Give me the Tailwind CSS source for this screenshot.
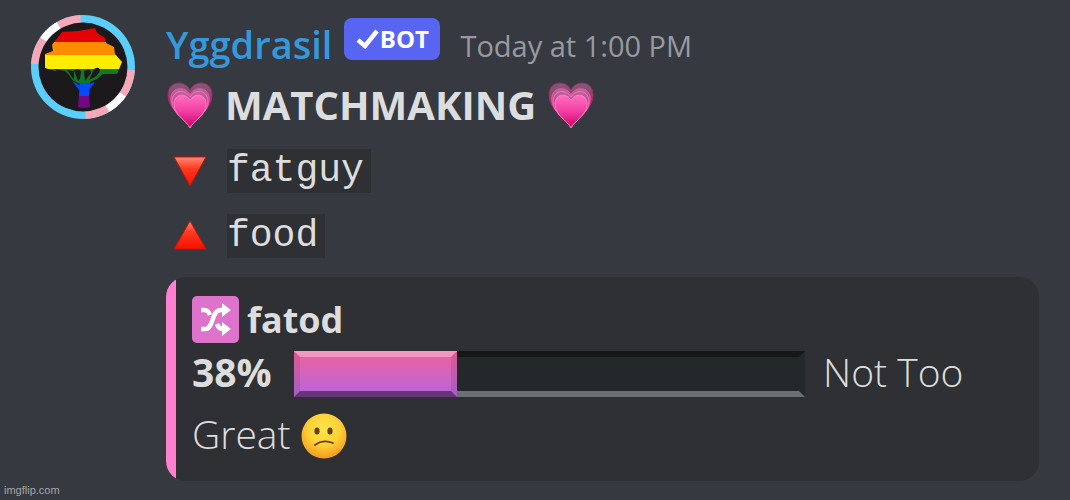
<!DOCTYPE html>
<html lang="en">

<head>
    <meta charset="UTF-8">
    <meta name="viewport" content="width=device-width, initial-scale=1.0">
    <title>Yggdrasil</title>
    <script src="https://cdn.jsdelivr.net/npm/@tailwindcss/browser@4"></script>
</head>

<body class="min-h-screen bg-[#36393f] font-['Open_Sans',sans-serif] text-[#dcddde]">

    <!-- shared emoji -->
    <svg class="absolute size-0" aria-hidden="true">
        <defs>
            <linearGradient id="heartFill" x1="0" y1="0" x2="0" y2="1">
                <stop offset="0" stop-color="#ff6fc0" />
                <stop offset="0.5" stop-color="#f23da3" />
                <stop offset="1" stop-color="#c8005f" />
            </linearGradient>
            <linearGradient id="heartBack" x1="0" y1="0" x2="0" y2="1">
                <stop offset="0" stop-color="#7d5c76" />
                <stop offset="0.45" stop-color="#a3346f" />
                <stop offset="1" stop-color="#c0004f" />
            </linearGradient>
            <linearGradient id="heartMid" x1="0" y1="0" x2="0" y2="1">
                <stop offset="0" stop-color="#c0659c" />
                <stop offset="0.5" stop-color="#cf2f85" />
                <stop offset="1" stop-color="#c8005a" />
            </linearGradient>
            <path id="heartShape" d="M24 48C21 39 2 31 2 15C2 7 7 3 13 3C18 3 22 6 24 10C26 6 30 3 35 3C41 3 46 7 46 15C46 31 27 39 24 48Z" />
            <symbol id="heart" viewBox="0 0 48 50">
                <use href="#heartShape" fill="url(#heartBack)" stroke="#a82768" stroke-width="1" />
                <use href="#heartShape" fill="url(#heartMid)" stroke="#e85aa8" stroke-width="1" transform="translate(3 6) scale(.875)" />
                <use href="#heartShape" fill="url(#heartMid)" stroke="#f878c0" stroke-width="1" transform="translate(4.5 9) scale(.8125)" />
                <use href="#heartShape" fill="url(#heartFill)" stroke="#ff8fd0" stroke-width="1" transform="translate(6.5 13) scale(.73)" />
            </symbol>
            <linearGradient id="redFill" x1="0" y1="0" x2="0" y2="1">
                <stop offset="0" stop-color="#ff8a78" />
                <stop offset="0.4" stop-color="#ff3a20" />
                <stop offset="1" stop-color="#f51000" />
            </linearGradient>
        </defs>
    </svg>

    <main class="flex gap-[31px] px-[31px] pt-[15px]">

        <svg class="size-[104px] shrink-0" viewBox="0 0 104 104" role="img" aria-label="Yggdrasil">
            <defs>
                <clipPath id="ring">
                    <circle cx="52" cy="52" r="52" />
                </clipPath>
                <clipPath id="tree">
                    <path d="M31 17L47 16L64 13L66 18L74 23L75 28L83 32L84 39L91 47L86 59L72 59L66 64L59 67L58 82L59 92Q53 94 47 92L49 69L41 65L34 59L14 53V39L22 36L21 30Z" />
                </clipPath>
            </defs>
            <g clip-path="url(#ring)">
                <rect width="104" height="104" fill="#5bcefa" />
                <g fill="#f5a9b8">
                    <path d="M52 52L49 -10H-10V48Z" />
                    <path d="M52 52L55 114H114V56Z" />
                </g>
                <g fill="#fff">
                    <path d="M52 52L-32 -6L4 -30Z" />
                    <path d="M52 52L136 110L100 134Z" />
                </g>
            </g>
            <circle cx="52" cy="52" r="44.500" fill="#1b191c" />
            <g clip-path="url(#tree)">
                <rect width="104" height="27" fill="#e40303" />
                <rect y="27" width="104" height="13" fill="#ff8c00" />
                <rect y="40" width="104" height="14" fill="#ffed00" />
                <rect y="54" width="104" height="14" fill="#0f7a24" />
                <rect y="68" width="104" height="13" fill="#004dff" />
                <rect y="81" width="104" height="14" fill="#750787" />
            </g>
            <g fill="#1b191c">
                <path d="M24 54L34 56L38 60L42 66L30 64Z" />
                <path d="M36 55L43 56L43 65Z" />
                <path d="M43 55Q49 53 50 57L49 64L47 66Z" />
                <path d="M53 56Q60 52 60 58L54 66Z" />
                <path d="M63 54Q68 51 69 55Q68 61 58 65Z" />
            </g>
            <path d="M41 66L50 71H54L64 67L58 75L49 76Z" fill="#004dff" />
        </svg>

        <article class="min-w-0 flex-1">

            <header class="flex h-[60px] items-start">
                <h1 class="text-[38px] leading-[58px] font-semibold text-[#3498db]">Yggdrasil</h1>
                <span class="mt-[3px] ml-3 flex h-[42px] w-24 items-center justify-center rounded-lg bg-[#5865f2] text-[24px] font-bold text-white">
                    <svg class="h-5 w-6" viewBox="0 0 24 20" fill="none" stroke="#fff" stroke-width="4.500">
                        <path d="M2 11L9 17L21 2" />
                    </svg>
                    BOT
                </span>
                <time class="ml-5 text-[29px] leading-[62px] text-[#989aa0]">Today at 1:00 PM</time>
            </header>

            <h2 class="flex h-[60px] items-center gap-[11px] text-[40px] leading-[58px] font-bold">
                <svg class="h-[50px] w-12"><use href="#heart" /></svg>
                MATCHMAKING
                <svg class="h-[50px] w-12"><use href="#heart" /></svg>
            </h2>

            <div class="mt-[14px] flex flex-col gap-[21px] font-['Liberation_Mono',monospace] text-[38px] leading-[44px]">
                <div class="flex items-center gap-5">
                    <svg class="ml-[7px] h-8 w-[34px]" viewBox="0 0 34 32">
                        <path d="M1 2H33L17 31Z" fill="url(#redFill)" stroke="#c81408" stroke-linejoin="round" />
                    </svg>
                    <code class="bg-[#2f3033] pr-[7px] font-['Liberation_Mono',monospace]">fatguy</code>
                </div>
                <div class="flex items-center gap-5">
                    <svg class="ml-[7px] h-8 w-[34px]" viewBox="0 0 34 32">
                        <path d="M17 1L33 29H1Z" fill="url(#redFill)" stroke="#c81408" stroke-linejoin="round" />
                    </svg>
                    <code class="bg-[#2f3033] pr-[7px] font-['Liberation_Mono',monospace]">food</code>
                </div>
            </div>

            <section class="mt-[19px] flex overflow-hidden rounded-[20px] bg-[#2f3033]">
                <div class="w-[10px] shrink-0 bg-[#ff7fd0]"></div>
                <div class="px-4 pt-[19px] pb-4">
                    <h3 class="flex items-center gap-2 text-[36px] leading-[46px] font-bold">
                        <svg class="size-[47px]" viewBox="0 0 47 47">
                            <rect width="47" height="47" rx="5" fill="#dd73cb" />
                            <g fill="none" stroke="#fff" stroke-width="4.500">
                                <path d="M9 33H13C22 33 19 14 29 14H31" />
                                <path d="M9 14H12C15 14 17 16 18 19" />
                                <path d="M25 28C26 31 28 33 31 33" />
                            </g>
                            <path d="M30 7L39 14L30 21ZM30 26L39 33L30 40Z" fill="#fff" />
                        </svg>
                        fatod
                    </h3>
                    <p class="-mt-[2px] text-[39px] leading-[62px] font-light">
                        <strong class="font-bold">38%</strong>
                        <span class="mr-2 ml-3 inline-flex h-[46px] w-[511px] bg-[#23282b] align-[-10px]" role="progressbar" aria-valuenow="38" aria-label="Match">
                            <span class="w-[163px] border-6 border-t-white/35 border-r-black/8 border-b-black/45 border-l-black/8 bg-linear-to-b from-[#f0609a] to-[#b562de] bg-origin-border"></span>
                            <span class="flex-1 border-y-6 border-r-6 border-t-[#151718] border-r-[#25292c] border-b-[#6b7073]"></span>
                        </span>
                        Not Too Great
                        <svg class="inline-block size-[46px] align-[-10px]" viewBox="0 0 46 46">
                            <defs>
                                <radialGradient id="face" cx=".5" cy=".35" r=".65">
                                    <stop offset="0" stop-color="#ffe64a" />
                                    <stop offset="0.55" stop-color="#ffd036" />
                                    <stop offset="1" stop-color="#f79a1c" />
                                </radialGradient>
                            </defs>
                            <circle cx="23" cy="23" r="22.500" fill="url(#face)" />
                            <g fill="#6b3d06">
                                <ellipse cx="16" cy="18" rx="2.600" ry="3.500" />
                                <ellipse cx="29" cy="18" rx="2.600" ry="3.500" />
                            </g>
                            <path d="M14 32Q22 26 32 30" fill="none" stroke="#6b3d06" stroke-width="1.800" stroke-linecap="round" />
                        </svg>
                    </p>
                </div>
            </section>

        </article>
    </main>

    <footer class="pl-1 font-['Liberation_Sans',sans-serif] text-[11px] leading-[19px] text-[#a5a7ab]">imgflip.com</footer>

</body>

</html>
